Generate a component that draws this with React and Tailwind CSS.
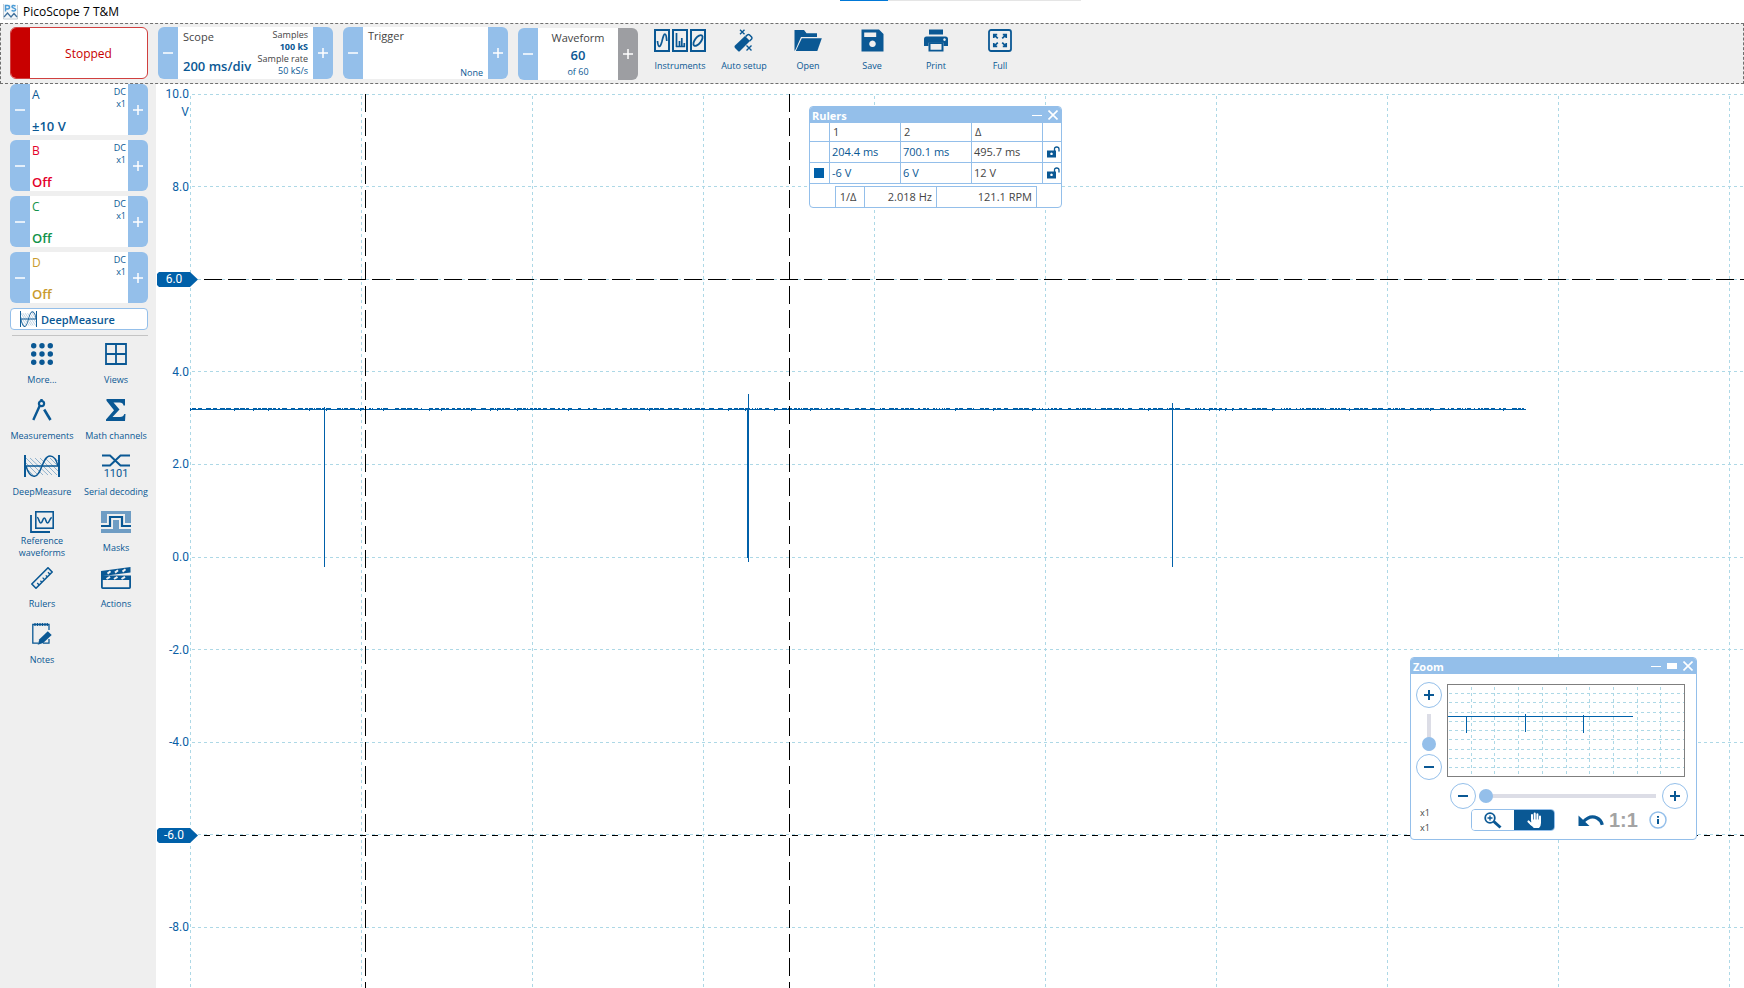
import React from "react";

const FONT = "font-['Open_Sans','Noto_Sans',sans-serif]";
const INK = "#0a5894";
const TRACE = "#0060a9";
const GRID = "#add8e6";

/* ---------- glyphs ---------- */

function Minus({ size = 10, color = "#fff", width = 2 }) {
  return (
    <svg width={size} height={size} viewBox="0 0 10 10" aria-hidden="true">
      <path d="M0 5H10" stroke={color} strokeWidth={width} />
    </svg>
  );
}

function Plus({ size = 10, color = "#fff", width = 2 }) {
  return (
    <svg width={size} height={size} viewBox="0 0 10 10" aria-hidden="true">
      <path d="M0 5H10M5 0V10" stroke={color} strokeWidth={width} />
    </svg>
  );
}

function AppLogo() {
  return (
    <svg width="15" height="16" viewBox="0 0 15 16" fill="none" aria-hidden="true">
      <rect x="0.5" y="0.5" width="13" height="14" fill="#f4f7fa" />
      <path d="M0.5 0V15H14.5V1" stroke="#c3ccd4" />
      <path d="M2.5 7.5V1.5H4.5Q6.5 1.5 6.5 3.2T4.5 5H2.5" stroke="#4a9bd6" strokeWidth="1.5" />
      <path d="M12.5 2Q9 0.8 9 2.8C9 4.4 12.7 3.8 12.7 5.6C12.7 7.4 9.5 7.1 8.6 6.4" stroke="#4a9bd6" strokeWidth="1.5" />
      <path d="M1 13L4.5 9L8 13L11 9.5L14 13" stroke="#41719c" strokeWidth="1.2" />
    </svg>
  );
}

const icons = {
  instruments: (
    <svg width="52" height="23" viewBox="0 0 52 23" fill="none" stroke={INK}>
      <rect x="1" y="1" width="14" height="21" strokeWidth="2" />
      <rect x="19" y="1" width="14" height="21" strokeWidth="2" />
      <rect x="37" y="1" width="14" height="21" strokeWidth="2" />
      <path d="M3.5 12C4 18.5 6 19.5 7.8 13C9 8 9.8 4.8 11.2 5.2C12.5 5.6 12.3 8 12.8 12" strokeWidth="1.7" />
      <path d="M22.5 4V18M22 17.5H31M25.5 12V18M27.8 9V18M30.3 14V18" strokeWidth="1.7" />
      <ellipse cx="44" cy="11.5" rx="3" ry="6.4" transform="rotate(38 44 11.5)" strokeWidth="1.8" />
    </svg>
  ),
  autoSetup: (
    <svg width="22" height="23" viewBox="0 0 22 23" fill="none">
      <path d="M2 16.5L12 7L17 12L7 22Q6 23 5 22L2 19Q0.8 17.8 2 16.5Z" fill={INK} />
      <path d="M12.6 7.6L14.6 5.8Q15.6 5 16.6 6L18.6 8Q19.4 9 18.6 10L16.6 12" stroke={INK} strokeWidth="1.5" />
      <path d="M7 0.8L11.5 5.3M11.5 0.8L7 5.3M13.5 16.5L18.5 21.5M18.5 16.5L13.5 21.5" stroke={INK} strokeWidth="1.4" />
    </svg>
  ),
  open: (
    <svg width="28" height="23" viewBox="0 0 28 23" fill={INK}>
      <path d="M0.5 22V1H10L12.5 4.2H23V8H7L1.8 20Z" />
      <path d="M7.8 9.2H27.8L23.3 22H1.8Z" />
    </svg>
  ),
  save: (
    <svg width="23" height="23" viewBox="0 0 23 23">
      <path fillRule="evenodd" fill={INK} d="M0.5 0.5H18L22.5 5V22.5H0.5ZM3.2 3.6V8H15.2V3.6ZM11.5 11.5a3.3 3.3 0 1 0 0.01 0Z" />
    </svg>
  ),
  print: (
    <svg width="24" height="23" viewBox="0 0 24 23" fill={INK}>
      <path d="M5 0.5H19V5.5H5Z" />
      <path fillRule="evenodd" d="M2.5 7.5H21.5Q24 7.5 24 10V17H19.5V13.8H4.5V17H0V10Q0 7.5 2.5 7.5ZM20.5 9.3a1.3 1.3 0 1 0 0.01 0Z" />
      <path fillRule="evenodd" d="M4.5 13.2H19.5V22.5H4.5ZM6.5 15V20.8H17.5V15Z" />
    </svg>
  ),
  full: (
    <svg width="24" height="23" viewBox="0 0 24 23" fill="none" stroke={INK}>
      <rect x="1" y="1" width="22" height="21" rx="2" strokeWidth="1.8" />
      <path d="M5.8 9V5.6H9.2M5.8 5.6L9.8 9.4M14.8 5.6H18.2V9M18.2 5.6L14.2 9.4M5.8 14V17.4H9.2M5.8 17.4L9.8 13.6M14.8 17.4H18.2V14M18.2 17.4L14.2 13.6" strokeWidth="1.7" />
    </svg>
  ),
  more: (
    <svg width="22" height="22" viewBox="0 0 22 22" fill={INK}>
      {[2.7, 11, 19.3].map((y) => [2.7, 11, 19.3].map((x) => <circle key={x + "-" + y} cx={x} cy={y} r="2.7" />))}
    </svg>
  ),
  views: (
    <svg width="22" height="22" viewBox="0 0 22 22" fill="none" stroke={INK} strokeWidth="1.8">
      <path d="M1 1H21V21H1ZM11 1V21M1 11H21" />
    </svg>
  ),
  measurements: (
    <svg width="22" height="22" viewBox="0 0 22 22" fill="none" stroke={INK}>
      <circle cx="10.5" cy="4.6" r="2.6" strokeWidth="2.2" />
      <path d="M10.5 2V0M8.6 7L2.3 21" strokeWidth="2.4" />
      <path d="M13.2 10.5L19.5 21" strokeWidth="2.6" />
    </svg>
  ),
  math: (
    <svg width="22" height="22" viewBox="0 0 22 22" fill={INK}>
      <path d="M1.5 0H20V6.5H18.5Q18 3.5 14.5 3.5H8.5L14.5 10.5L7.5 18H15Q18.5 18 19.3 15H20.5L20 22H1V20.5L9 11.2L1.5 1.8Z" />
    </svg>
  ),
  serial: (
    <svg width="30" height="26" viewBox="0 0 30 26" fill="none" stroke={INK} className="mt-[3px]">
      <path d="M1 1.5H9L19.5 11.5H29M1 11.5H9L19.5 1.5H29" strokeWidth="2" />
      <text x="15" y="23" textAnchor="middle" fontFamily="Roboto" fontSize="11" fill={INK} stroke="none">1101</text>
    </svg>
  ),
  reference: (
    <svg width="24" height="22" viewBox="0 0 24 22" fill="none" stroke={INK}>
      <rect x="5.8" y="0.8" width="17.4" height="16.4" strokeWidth="1.6" />
      <path d="M1 4V21H20" strokeWidth="1.8" />
      <path d="M7 6.5C8.8 6 9 12 10.8 12C12.6 12 12.6 7 14.3 7C16 7 15.8 12 17.6 12C19.4 12 19.6 7 21.8 6.5" strokeWidth="1.6" />
    </svg>
  ),
  masks: (
    <svg width="30" height="22" viewBox="0 0 30 22" fill="none">
      <path d="M0 0H30V22H0Z" fill="#6f9dc4" />
      <path d="M0 15H9V6H21V15H30" stroke="#efefef" strokeWidth="6" />
      <path d="M0 15H9V6H21V15H30" stroke={INK} strokeWidth="2.2" />
    </svg>
  ),
  rulers: (
    <svg width="22" height="22" viewBox="0 0 22 22" fill="none" stroke={INK} strokeWidth="1.6">
      <path d="M17 0.8L21.2 5L5 21.2L0.8 17Z" />
      <path d="M19 7.2L17 5.2M16.3 9.9L14.8 8.4M13.6 12.6L11.6 10.6M10.9 15.3L9.4 13.8M8.2 18L6.2 16" strokeWidth="1.3" />
    </svg>
  ),
  actions: (
    <svg width="30" height="22" viewBox="0 0 30 22" fill="none">
      <path d="M0 4L29.5 0V5.5L0 9.3Z" fill={INK} />
      <path d="M0 8.5H30V13H0Z" fill={INK} />
      <path d="M0.9 12V20.3Q0.9 21.1 1.7 21.1H28.3Q29.1 21.1 29.1 20.3V12" stroke={INK} strokeWidth="1.8" />
      <path d="M6.5 6.6L9.5 4.2M14 5.6L17 3.2M21.5 4.6L24.5 2.2M5.5 12L9 9.8M13 12L16.5 9.8M20.5 12L24 9.8" stroke="#efefef" strokeWidth="2" />
    </svg>
  ),
  notes: (
    <svg width="22" height="22" viewBox="0 0 22 22" fill="none">
      <path d="M18 7V1.5H1.8V20.2H7M12 20.2H18V16" stroke={INK} strokeWidth="1.3" />
      <path d="M4 0V3M6.5 0V3M9 0V3M11.5 0V3M14 0V3M16.3 0V3" stroke={INK} strokeWidth="1.2" />
      <path d="M16.8 8.3L20.7 12L12.2 20L6.7 21.8L8.4 16.2Z" fill={INK} />
    </svg>
  ),
};

function DeepMeasureIcon({ w, h }) {
  return (
    <svg width={w} height={h} viewBox="0 0 36 22" preserveAspectRatio="none" fill="none" stroke={INK} aria-hidden="true">
      <path
        d="M2 13L9 20M2 8L14 20M2 3L19 20M6 3L24 20M11 3L28 20M16 3L33 20M21 3L34 16M26 3L34 11M31 3L34 6"
        stroke="#86abc9"
        strokeWidth="0.9"
      />
      <path d="M1 0V22M35 0V22" strokeWidth="2" />
      <path d="M1 11H35" strokeWidth="1.4" />
      <path d="M2 11C4 18 7 21.5 10.5 21.3C18 20.5 18 1 26 1C30 1 32.5 5 34 11" strokeWidth="1.4" />
    </svg>
  );
}

/* ---------- toolbar ---------- */

function StepButton({ kind, side, label, grey }) {
  const round = side === "left" ? "rounded-l-md" : "rounded-r-md";
  return (
    <button
      type="button"
      aria-label={label}
      className={`flex w-5 shrink-0 items-center justify-center ${round} ${grey ? "bg-[#9d9ea2]" : "bg-[#94bfea]"}`}
    >
      {kind === "minus" ? <Minus width={1.5} /> : <Plus width={1.5} />}
    </button>
  );
}

function Tool({ icon, label }) {
  return (
    <button type="button" className="flex w-16 flex-col items-center gap-[6px] text-[#0a5894]">
      <span className="flex h-6 items-center">{icon}</span>
      <span className="text-[9px] leading-4 whitespace-nowrap">{label}</span>
    </button>
  );
}

function Toolbar() {
  return (
    <header className="flex h-[61px] shrink-0 items-start border border-dashed border-[#707070] bg-[#efefef] py-[3px] pl-[9px]">
      <button
        type="button"
        className="flex h-[52px] w-[138px] shrink-0 overflow-hidden rounded-md border border-[#d0403f] bg-white text-xs text-[#c80000]"
      >
        <span className="h-full w-[19px] bg-[#c80000]" />
        <span className="flex h-full grow items-center justify-center pt-[2px]">Stopped</span>
      </button>

      <section className="ml-[10px] flex h-[52px] w-[175px] shrink-0">
        <StepButton kind="minus" side="left" label="Decrease timebase" />
        <div className="flex grow justify-between bg-white pr-[5px] pl-[5px] whitespace-nowrap">
          <div className="flex flex-col justify-between pt-[2px] pb-[3px]">
            <span className="text-[11px] leading-4 text-[#444]">Scope</span>
            <span className="text-[13px] leading-5 font-semibold text-[#0a5894]">200 ms/div</span>
          </div>
          <div className="-ml-4 pt-[2px] text-right text-[9px] leading-3 text-[#444]">
            <div>Samples</div>
            <div className="font-bold text-[#0a5894]">100 kS</div>
            <div>Sample rate</div>
            <div className="text-[#0a5894]">50 kS/s</div>
          </div>
        </div>
        <StepButton kind="plus" side="right" label="Increase timebase" />
      </section>

      <section className="ml-[10px] flex h-[52px] w-[165px] shrink-0">
        <StepButton kind="minus" side="left" label="Decrease trigger" />
        <div className="flex grow flex-col justify-between bg-white px-[5px] pt-[1px]">
          <span className="text-[11px] leading-4 text-[#444]">Trigger</span>
          <span className="text-right text-[9px] leading-3 text-[#0a5894]">None</span>
        </div>
        <StepButton kind="plus" side="right" label="Increase trigger" />
      </section>

      <section className="mt-px ml-[10px] flex h-[52px] w-[120px] shrink-0">
        <StepButton kind="minus" side="left" label="Previous waveform" />
        <div className="flex grow flex-col items-center bg-white pt-[2px] text-[#0a5894]">
          <span className="text-[11px] leading-4 text-[#444]">Waveform</span>
          <span className="text-[13px] leading-[18px] font-semibold">60</span>
          <span className="text-[9px] leading-4">of 60</span>
        </div>
        <StepButton kind="plus" side="right" label="Next waveform" grey />
      </section>

      <nav className="ml-[10px] flex pt-[1px]">
        <Tool icon={icons.instruments} label="Instruments" />
        <Tool icon={icons.autoSetup} label="Auto setup" />
        <Tool icon={icons.open} label="Open" />
        <Tool icon={icons.save} label="Save" />
        <Tool icon={icons.print} label="Print" />
        <Tool icon={icons.full} label="Full" />
      </nav>
    </header>
  );
}

/* ---------- sidebar ---------- */

const channels = [
  { name: "A", value: "±10 V", color: "text-[#0a5894]" },
  { name: "B", value: "Off", color: "text-[#e4002b]" },
  { name: "C", value: "Off", color: "text-[#12924a]" },
  { name: "D", value: "Off", color: "text-[#c99a2e]" },
];

const sideTools = [
  { label: "More...", icon: icons.more },
  { label: "Views", icon: icons.views },
  { label: "Measurements", icon: icons.measurements },
  { label: "Math channels", icon: icons.math },
  { label: "DeepMeasure", icon: <DeepMeasureIcon w={36} h={22} /> },
  { label: "Serial decoding", icon: icons.serial },
  { label: "Reference waveforms", icon: icons.reference, wrap: true },
  { label: "Masks", icon: icons.masks },
  { label: "Rulers", icon: icons.rulers },
  { label: "Actions", icon: icons.actions },
  { label: "Notes", icon: icons.notes },
];

function Sidebar() {
  return (
    <aside className="w-[156px] shrink-0 bg-[#efefef]">
      <div className="flex flex-col gap-[5px] pr-2 pl-[10px]">
        {channels.map((c) => (
          <section key={c.name} className="flex h-[51px]">
            <StepButton kind="minus" side="left" label={`Decrease range of channel ${c.name}`} />
            <div className="flex grow justify-between bg-white pr-[2px] pl-[2px]">
              <div className={`flex flex-col justify-between pt-[3px] pb-px ${c.color}`}>
                <span className="text-[12px] leading-4 font-medium">{c.name}</span>
                <span className="text-[13px] leading-4 font-semibold">{c.value}</span>
              </div>
              <div className="pt-[2px] text-right text-[9px] leading-3 text-[#0a5894]">
                <div>DC</div>
                <div>x1</div>
              </div>
            </div>
            <StepButton kind="plus" side="right" label={`Increase range of channel ${c.name}`} />
          </section>
        ))}
        <button
          type="button"
          className="flex h-[22px] items-center gap-1 rounded border border-[#94bfea] bg-white pl-[9px] text-[#0a5894]"
        >
          <DeepMeasureIcon w={17} h={16} />
          <span className="pt-px text-[11px] leading-4 font-semibold">DeepMeasure</span>
        </button>
      </div>
      <div className="mt-[5px] mr-2 ml-3 h-px bg-[#c4c4c4]" />
      <nav className="grid grid-cols-2 pt-[6px] pr-[3px] pl-[5px] text-[#0a5894]">
        {sideTools.map((t) => (
          <button
            key={t.label}
            type="button"
            className={`flex h-14 flex-col items-center ${t.wrap ? "gap-[2px]" : "gap-[7px]"}`}
          >
            <span className="flex h-[23px] items-center">{t.icon}</span>
            <span className={`text-[9px] ${t.wrap ? "w-16 leading-3" : "leading-4 whitespace-nowrap"}`}>{t.label}</span>
          </button>
        ))}
      </nav>
    </aside>
  );
}

/* ---------- plot ---------- */

const columns = [34, 205, 376, 547, 718, 889, 1060, 1231, 1402, 1573];
const rows = [
  { y: 10, label: "10.0", base: 14 },
  { y: 102, label: "8.0", base: 107 },
  { y: 195, label: null },
  { y: 287, label: "4.0", base: 292 },
  { y: 380, label: "2.0", base: 384 },
  { y: 473, label: "0.0", base: 477 },
  { y: 565, label: "-2.0", base: 570 },
  { y: 658, label: "-4.0", base: 662 },
  { y: 750, label: null },
  { y: 843, label: "-8.0", base: 847 },
];

function noisePath() {
  let seed = 7;
  const next = () => {
    seed = (seed * 16807) % 2147483647;
    return seed / 2147483647;
  };
  let d = "";
  let x = 34;
  while (x < 1368) {
    const run = 1 + Math.floor(next() * 5);
    const end = Math.min(x + run, 1370);
    d += `M${x} 324.5H${end}`;
    if (next() > 0.86) d += `M${x} 326.5h1`;
    x = end + 1 + Math.floor(next() * next() * 7);
  }
  return d;
}

function RulerFlag({ y, label }) {
  return (
    <g>
      <path d={`M3 ${y - 7}H34L42 ${y + 0.5}L34 ${y + 8}H3L1 ${y + 6}V${y - 5}Z`} fill={TRACE} />
      <text x="18" y={y + 4} textAnchor="middle" fill="#fff">{label}</text>
    </g>
  );
}

function Plot() {
  return (
    <svg className="absolute inset-0 h-full w-full" fontFamily="Roboto, sans-serif" fontSize="12" role="img" aria-label="Channel A voltage over time">
      <g stroke={GRID} strokeDasharray="3 3" shapeRendering="crispEdges">
        {columns.map((x) => <line key={x} x1={x + 0.5} y1="12" x2={x + 0.5} y2="100%" />)}
        {rows.map((r) => <line key={r.y} x1="36" y1={r.y + 0.5} x2="100%" y2={r.y + 0.5} />)}
      </g>
      <g fill="#0b5fa5" textAnchor="end">
        {rows.map((r) => r.label && <text key={r.y} x="33" y={r.base}>{r.label}</text>)}
        <text x="33" y="32">V</text>
      </g>
      <g stroke={TRACE} shapeRendering="crispEdges">
        <path d="M34 325.5H1370" />
        <path d={noisePath()} />
        <path d="M168.5 323V483M592.5 310V478M591.5 325V474M1016.5 319V483" />
      </g>
      <g stroke="#000" shapeRendering="crispEdges">
        <line x1="209.5" y1="10" x2="209.5" y2="100%" strokeDasharray="18 6" />
        <line x1="633.5" y1="10" x2="633.5" y2="100%" strokeDasharray="18 6" />
        <line x1="48" y1="195.5" x2="100%" y2="195.5" strokeDasharray="18 6" />
        <line x1="48" y1="751.5" x2="100%" y2="751.5" strokeDasharray="6 6" />
      </g>
      <RulerFlag y={195} label="6.0" />
      <RulerFlag y={751} label="-6.0" />
    </svg>
  );
}

/* ---------- floating panels ---------- */

function WindowButton({ label, children }) {
  return (
    <button type="button" aria-label={label} className="flex h-3 w-3 items-center justify-center">
      {children}
    </button>
  );
}

const MinimiseGlyph = (
  <svg width="10" height="10" viewBox="0 0 10 10"><path d="M0 5.5H10" stroke="#fff" /></svg>
);
const MaximiseGlyph = (
  <svg width="10" height="6" viewBox="0 0 10 6"><path d="M0 0H10V6H0Z" fill="#fff" /></svg>
);
const CloseGlyph = (
  <svg width="10" height="10" viewBox="0 0 10 10"><path d="M0.5 0.5L9.5 9.5M9.5 0.5L0.5 9.5" stroke="#fff" strokeWidth="1.6" /></svg>
);

function PanelHeader({ title, children }) {
  return (
    <div className="flex h-4 items-center bg-[#94bfea] pr-[2px] pl-[2px]">
      <h2 className="grow pt-px text-[11px] leading-4 font-bold text-white">{title}</h2>
      <div className="flex gap-1">{children}</div>
    </div>
  );
}

function UnlockButton({ label }) {
  return (
    <button type="button" aria-label={label} className="flex w-full items-center justify-center pl-[2px]">
      <svg width="13" height="12" viewBox="0 0 13 12" fill="none">
        <path fillRule="evenodd" d="M0 4.5H9V11.5H0ZM4.5 6.5a1.3 1.3 0 1 0 0.01 0Z" fill={INK} />
        <path d="M7.5 5V3Q7.5 1 9.7 1T12 3V5.5" stroke={INK} strokeWidth="1.3" />
      </svg>
    </button>
  );
}

function RulersPanel() {
  const cell = "border-r border-b border-[#94bfea] pl-[2px] text-left font-normal";
  const head = "border-r border-b border-[#94bfea] pl-[3px] text-left font-normal";
  return (
    <section className="absolute top-[22px] left-[653px] w-[253px] overflow-hidden rounded border border-[#94bfea] bg-white text-[11px] text-[#444]">
      <PanelHeader title="Rulers">
        <WindowButton label="Minimise">{MinimiseGlyph}</WindowButton>
        <WindowButton label="Close">{CloseGlyph}</WindowButton>
      </PanelHeader>
      <table className="w-full table-fixed border-separate border-spacing-0 leading-4">
        <colgroup>
          <col className="w-5" />
          <col className="w-[71px]" />
          <col className="w-[71px]" />
          <col className="w-[71px]" />
          <col />
        </colgroup>
        <thead>
          <tr className="h-[19px]">
            <th className={head} />
            <th className={head}>1</th>
            <th className={head}>2</th>
            <th className={head}>Δ</th>
            <th className="border-b border-[#94bfea]" />
          </tr>
        </thead>
        <tbody>
          <tr className="h-[21px]">
            <td className={cell} />
            <td className={`${cell} text-[#0a5894]`}>204.4 ms</td>
            <td className={`${cell} text-[#0a5894]`}>700.1 ms</td>
            <td className={cell}>495.7 ms</td>
            <td className="border-b border-[#94bfea]"><UnlockButton label="Lock time rulers" /></td>
          </tr>
          <tr className="h-[21px]">
            <td className={cell}><div className="ml-[2px] h-[10px] w-[10px] bg-[#0060a9]" /></td>
            <td className={`${cell} text-[#0a5894]`}>-6 V</td>
            <td className={`${cell} text-[#0a5894]`}>6 V</td>
            <td className={cell}>12 V</td>
            <td className="border-b border-[#94bfea]"><UnlockButton label="Lock signal rulers" /></td>
          </tr>
        </tbody>
      </table>
      <div className="mt-[2px] mr-6 ml-[25px] flex h-[21px] items-center border border-b-0 border-[#94bfea] leading-5">
        <div className="w-[29px] border-r border-[#94bfea] pr-1 text-center">1/Δ</div>
        <div className="w-[72px] border-r border-[#94bfea] pr-1 text-right">2.018 Hz</div>
        <div className="grow pr-1 text-right">121.1 RPM</div>
      </div>
    </section>
  );
}

function RoundButton({ label, children }) {
  return (
    <button
      type="button"
      aria-label={label}
      className="flex h-[26px] w-[26px] shrink-0 items-center justify-center rounded-full border border-[#94bfea] bg-white"
    >
      {children}
    </button>
  );
}

const thumb =
  "appearance-none bg-transparent [&::-webkit-slider-thumb]:h-[14px] [&::-webkit-slider-thumb]:w-[14px] [&::-webkit-slider-thumb]:appearance-none [&::-webkit-slider-thumb]:rounded-full [&::-webkit-slider-thumb]:bg-[#94bfea]";

function Overview() {
  const xs = [24, 47, 71, 95, 119, 142, 166, 190, 213];
  const ys = [9, 18, 28, 37, 46, 55, 65, 74, 83];
  return (
    <div className="h-[93px] grow border border-[#7f7f7f]">
      <svg width="100%" height="100%" viewBox="0 0 236 91" preserveAspectRatio="none" shapeRendering="crispEdges" role="img" aria-label="Waveform overview">
        <g stroke={GRID} strokeDasharray="3 3">
          {xs.map((x) => <path key={x} d={`M${x - 0.5} 2V91`} />)}
          {ys.map((y) => <path key={y} d={`M1 ${y - 0.5}H236`} />)}
        </g>
        <path d="M0 31.5H185M18.5 31V48M77.5 29V47M135.5 30V48" stroke={TRACE} />
      </svg>
    </div>
  );
}

function ZoomPanel() {
  return (
    <section className="absolute top-[573px] left-[1254px] w-[287px] overflow-hidden rounded border border-[#94bfea] bg-white">
      <PanelHeader title="Zoom">
        <WindowButton label="Minimise">{MinimiseGlyph}</WindowButton>
        <WindowButton label="Maximise">{MaximiseGlyph}</WindowButton>
        <WindowButton label="Close">{CloseGlyph}</WindowButton>
      </PanelHeader>

      <div className="flex pt-2 pr-[11px] pl-[5px]">
        <div className="flex h-[98px] w-[26px] flex-col items-center">
          <RoundButton label="Zoom in vertically"><Plus color={INK} /></RoundButton>
          <input
            type="range"
            min="1"
            max="10"
            defaultValue="1"
            aria-label="Vertical zoom"
            className={`mt-[6px] mb-[3px] h-[37px] w-[14px] shrink-0 [direction:rtl] [writing-mode:vertical-lr] [&::-webkit-slider-runnable-track]:bg-[linear-gradient(to_right,transparent_5px,#dcdde6_5px,#dcdde6_9px,transparent_9px)] ${thumb}`}
          />
          <RoundButton label="Zoom out vertically"><Minus color={INK} /></RoundButton>
        </div>
        <div className="flex grow items-start pt-[2px] pl-[5px]">
          <Overview />
        </div>
      </div>

      <div className="mt-[3px] flex items-end pr-2 pl-[9px]">
        <div className="w-[30px] pb-1 text-[9px] leading-[15px] text-[#444]">
          <div>x1</div>
          <div>x1</div>
        </div>
        <div className="min-w-0 grow">
          <div className="flex items-center">
            <RoundButton label="Zoom out horizontally"><Minus color={INK} /></RoundButton>
            <input
              type="range"
              min="1"
              max="10"
              defaultValue="1"
              aria-label="Horizontal zoom"
              className={`mr-[6px] ml-[3px] h-[14px] min-w-0 grow [&::-webkit-slider-runnable-track]:h-1 [&::-webkit-slider-runnable-track]:bg-[#dcdde6] [&::-webkit-slider-thumb]:-mt-[5px] ${thumb}`}
            />
            <RoundButton label="Zoom in horizontally"><Plus color={INK} /></RoundButton>
          </div>

          <div className="flex h-[30px] items-start pl-[21px]">
            <div className="flex h-[22px] w-[84px] shrink-0 overflow-hidden rounded border border-[#94bfea]">
              <button type="button" aria-label="Zoom tool" className="flex w-[42px] items-center justify-center bg-white">
                <svg width="18" height="17" viewBox="0 0 18 17" fill="none" stroke={INK}>
                  <circle cx="6" cy="6" r="4.8" strokeWidth="1.8" />
                  <path d="M3.5 6H8.5M6 3.5V8.5" strokeWidth="1.3" />
                  <path d="M9.8 9.5L16.5 15.5" strokeWidth="3" />
                </svg>
              </button>
              <button type="button" aria-label="Pan tool" className="flex grow items-center justify-center bg-[#0a5894]">
                <svg width="16" height="17" viewBox="0 0 16 17" fill="none" stroke="#fff" strokeLinecap="round">
                  <path d="M6 8V3M8.7 8V1.5M11.4 8V2.2M14 9V4.5" strokeWidth="2" />
                  <path d="M2.5 9.5L5.5 12.5" strokeWidth="2.2" />
                  <path d="M5.2 7.5H15V11Q15 14 13 16H7.8L4 12L5.2 10.5Z" fill="#fff" stroke="none" />
                </svg>
              </button>
            </div>
            <button type="button" aria-label="Undo zoom" className="mt-[5px] ml-[23px]">
              <svg width="26" height="13" viewBox="0 0 26 13" fill="none">
                <path d="M5 8Q12 0.5 19 4Q23 6 24.3 10.8" stroke={INK} strokeWidth="3.2" />
                <path d="M0.5 1.5V12H11.5Z" fill={INK} />
              </svg>
            </button>
            <button type="button" className="ml-[5px] font-['Liberation_Sans',sans-serif] text-[20px] leading-[22px] font-bold text-[#a3a3a3]">1:1</button>
            <button type="button" aria-label="Information" className="mt-[2px] ml-[11px]">
              <svg width="18" height="18" viewBox="0 0 18 18" fill="none">
                <circle cx="9" cy="9" r="8" stroke="#94bfea" strokeWidth="1.5" />
                <path d="M9 5V6.8M9 8V13" stroke={INK} strokeWidth="2" />
              </svg>
            </button>
          </div>
        </div>
      </div>
    </section>
  );
}

export default function App() {
  return (
    <div className={`flex h-screen flex-col overflow-hidden bg-white ${FONT}`}>
      <div className="relative flex h-[23px] shrink-0 items-center gap-[5px] bg-white pl-[3px]">
        <AppLogo />
        <h1 className="text-[12px] leading-4 text-black">PicoScope 7 T&amp;M</h1>
        <div className="absolute top-0 left-[840px] flex h-px w-[241px] bg-[#e5e5e5]">
          <div className="w-12 bg-[#0078d7]" />
        </div>
      </div>
      <Toolbar />
      <div className="flex min-h-0 grow">
        <Sidebar />
        <main className="relative min-w-0 grow overflow-hidden bg-white">
          <Plot />
          <RulersPanel />
          <ZoomPanel />
        </main>
      </div>
    </div>
  );
}
